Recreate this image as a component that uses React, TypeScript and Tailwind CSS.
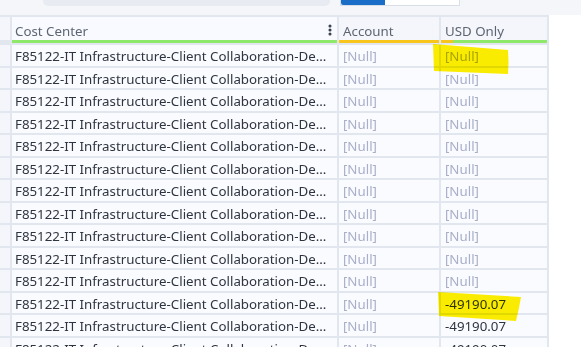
import { EllipsisVertical } from 'lucide-react'

const costCenter = 'F85122-IT Infrastructure-Client Collaboration-De...'

const rows = Array.from({ length: 14 }, (_, i) => ({
  account: '[Null]',
  usd: i >= 11 ? '-49190.07' : '[Null]',
}))

function Cell({ className = '', children }: { className?: string; children?: React.ReactNode }) {
  return (
    <div className={`flex h-[20.5px] items-center overflow-hidden whitespace-nowrap bg-[#fafbfe] pt-[2px] ${className}`}>
      {children}
    </div>
  )
}

export default function App() {
  return (
    <div
      className="relative h-[347px] w-[581px] overflow-hidden bg-white text-[13.3px] leading-[16px]"
      style={{ fontFamily: '"Noto Sans", "Open Sans", sans-serif' }}
    >
      {/* toolbar strip */}
      <div className="flex h-[15px] items-start bg-[#f4f6f9]">
        <div className="ml-[43px] h-[6px] w-[287px] rounded-b-[5px] bg-[#e8ecf2]" />
        <div className="ml-[10px] flex h-[6px] border border-t-0 border-[#d9dfe8] bg-white">
          <div className="w-[44px] rounded-bl-[2px] bg-[#1b6ec7]" />
          <div className="w-[74px]" />
        </div>
      </div>

      {/* grid */}
      <div className="grid w-[549px] grid-cols-[10px_325px_100px_106px] gap-[2px] bg-[#e2e7ef] pr-[2px] pt-[2px]">
        {/* header */}
        <div className="h-[26px] border-b-[3px] border-[#e2e7ef] bg-[#f4f6fb]" />
        <div className="flex h-[26px] items-center justify-between border-b-[3px] border-[#8ee86a] bg-[#f8faff] pl-[3px] pt-[4px] text-[#5d6573]">
          <span>Cost Center</span>
          <EllipsisVertical size={14} strokeWidth={3.2} className="-mt-[2px] text-[#2c3340]" />
        </div>
        <div className="flex h-[26px] items-center border-b-[3px] border-[#f7c51c] bg-[#f4f6fb] pl-[4px] pt-[4px] text-[#5d6573]">
          Account
        </div>
        <div className="flex h-[26px] flex-col bg-[#f4f6fb] text-[#5d6573]">
          <div className="flex flex-1 items-center pl-[4px] pt-[4px]">USD Only</div>
          <div className="flex h-[3px]">
            <div className="w-[12px] bg-[#f7c51c]" />
            <div className="flex-1 bg-[#8ee86a]" />
          </div>
        </div>

        {rows.map((row, i) => (
          <div key={i} className="contents">
            <div className="h-[20.5px] bg-[#f4f6fb]" />
            <Cell className="pl-[3px] text-[#2f3540]">{costCenter}</Cell>
            <Cell className="pl-[4px] text-[#a9aec9]">{row.account}</Cell>
            <Cell className={row.usd === '[Null]' ? 'pl-[4px] text-[#a9aec9]' : 'pl-[4px] text-[#2f3540]'}>{row.usd}</Cell>
          </div>
        ))}
      </div>

      {/* highlighter marks */}
      <svg className="pointer-events-none absolute left-0 top-0 mix-blend-multiply" width="581" height="347">
        <path d="M433 44 L508 50 Q509 62 508 74 L434 71 Z" fill="#fff000" />
        <path d="M438 292 L521 297 Q519 309 516 321 L439 316 Z" fill="#fff000" />
      </svg>
    </div>
  )
}
